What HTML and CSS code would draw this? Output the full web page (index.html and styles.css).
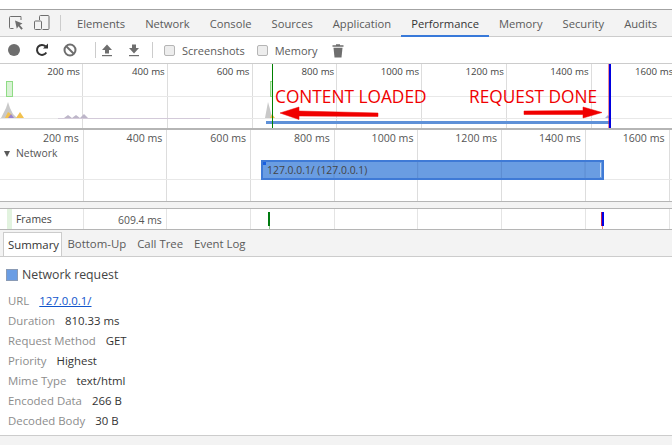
FILE: index.html
```html
<!DOCTYPE html>
<html lang="en">
<head>
<meta charset="utf-8">
<title>DevTools Performance</title>
<link rel="stylesheet" href="styles.css">
</head>
<body>
<div class="devtools">
  <nav class="tabbar">
    <div class="tool-icons">
      <svg class="icon" width="18" height="18" viewBox="0 0 18 18"><path d="M14 3.5V2.5H3.5A1 1 0 0 0 2.5 3.5V13.500A1 1 0 0 0 3.500 14.500H6.500M14 3.500V6" fill="none" stroke="#6e6e6e" stroke-width="1"/><path d="M8 6.500L15.500 9.500L12.800 11L15.800 14.500L14.300 15.800L11.500 12.300L9.800 14.800Z" fill="#6e6e6e"/></svg>
      <svg class="icon" width="18" height="18" viewBox="0 0 18 18"><path d="M6.500 6V2.500A1 1 0 0 1 7.500 1.500H15A1 1 0 0 1 16 2.500V14.500A1 1 0 0 1 15 15.500H9.500" fill="none" stroke="#6e6e6e"/><rect x="1.500" y="7" width="7" height="8.500" rx="1" fill="none" stroke="#6e6e6e"/></svg>
    </div>
    <span class="vsep tab-sep"></span>
    <a class="tab">Elements</a><a class="tab">Network</a><a class="tab">Console</a><a class="tab">Sources</a><a class="tab">Application</a><a class="tab active">Performance</a><a class="tab">Memory</a><a class="tab">Security</a><a class="tab">Audits</a>
  </nav>

  <div class="toolbar">
    <svg class="tool rec" width="14" height="14" viewBox="0 0 14 14"><circle cx="7" cy="7" r="6" fill="#6e6e6e"/></svg>
    <svg class="tool" width="14" height="14" viewBox="0 0 14 14"><path d="M11.300 9.500A5 5 0 1 1 10.500 3.300" fill="none" stroke="#333" stroke-width="2"/><path d="M8 5.500H13V0.500Z" fill="#333"/></svg>
    <svg class="tool" width="14" height="14" viewBox="0 0 14 14"><circle cx="7" cy="7" r="5.500" fill="none" stroke="#6e6e6e" stroke-width="2"/><path d="M3 3L11 11" stroke="#6e6e6e" stroke-width="2"/></svg>
    <span class="vsep bar-sep-a"></span>
    <svg class="tool tool-up" width="12" height="14" viewBox="0 0 12 14"><path d="M6 1.500L11 7H8V10.500H4V7H1Z" fill="#6e6e6e"/><rect x="1" y="12" width="10" height="1.200" fill="#6e6e6e"/></svg>
    <svg class="tool tool-down" width="12" height="14" viewBox="0 0 12 14"><path d="M6 10.500L11 5H8V1.500H4V5H1Z" fill="#6e6e6e"/><rect x="1" y="12" width="10" height="1.200" fill="#6e6e6e"/></svg>
    <span class="vsep bar-sep-b"></span>
    <label class="check"><span class="box"></span>Screenshots</label>
    <label class="check check-mem"><span class="box"></span>Memory</label>
    <svg class="trash" width="12" height="15" viewBox="0 0 12 15"><path d="M4 1.200H8V2.200H11.500V3.700H0.500V2.200H4Z" fill="#6e6e6e"/><path d="M1.500 4.700H10.500L9.500 14.500H2.500Z" fill="#6e6e6e"/></svg>
  </div>

  <section class="overview">
    <div class="ruler ruler-over">
      <span>200 ms</span><span>400 ms</span><span>600 ms</span><span>800 ms</span><span>1000 ms</span><span>1200 ms</span><span>1400 ms</span><span>1600 ms</span>
    </div>
    <svg class="chart" width="672" height="65" viewBox="0 64 672 65">
      <path d="M0 96.500H672M0 118.500H672" stroke="#e8e8e8"/>
      <rect x="6.500" y="81.500" width="6" height="15" fill="#d9f2d5" stroke="#8fdc85"/>
      <rect x="270.500" y="81.500" width="2" height="15" fill="#d9f2d5" stroke="#8fdc85"/>
      <path d="M1 118L6 108L8 102L10 108L13 114L17 118Z" fill="#c9c9c9"/>
      <path d="M5 118L8 112L11 114L13 118Z" fill="#f2c14e"/>
      <path d="M8 118L11 114L14 118Z" fill="#9a82cf"/>
      <path d="M16 118L20 112L24 118Z" fill="#f2c14e"/>
      <path d="M64 118L68 115L72 118ZM72 118L76 115L80 118ZM80 118L84 114L88 118Z" fill="#bdb6c9"/>
      <path d="M58 118.500H210" stroke="#d3cad9" stroke-width="1"/>
      <path d="M265 118L268 102L270 109L272 118Z" fill="#c9c9c9"/>
      <path d="M270 118L272 114L275 118Z" fill="#f2c14e"/>
      <path d="M605 118L608 115L610 118Z" fill="#a8b8d8"/>
      <rect x="266" y="121" width="344" height="3" fill="#5f91d8"/>
      <rect x="272" y="64" width="1" height="65" fill="#008000"/>
      <rect x="608.500" y="64" width="1" height="65" fill="#e02040"/>
      <rect x="609" y="64" width="2" height="65" fill="#0000e0"/>
      <path d="M280 113L299 107V111L378 113V116.500L299 116V119.500Z" fill="#f00000" stroke="#f00000" stroke-linejoin="round" stroke-width="0.500"/>
      <path d="M602 112.500L583 107V110.500L524 111V114.500L583 114.500V118Z" fill="#f00000" stroke="#f00000" stroke-linejoin="round" stroke-width="0.500"/>
    </svg>
    <span class="note note-a">CONTENT LOADED</span>
    <span class="note note-b">REQUEST DONE</span>
  </section>

  <section class="flame">
    <div class="ruler ruler-main">
      <span>200 ms</span><span>400 ms</span><span>600 ms</span><span>800 ms</span><span>1000 ms</span><span>1200 ms</span><span>1400 ms</span><span>1600 ms</span>
    </div>
    <div class="net-row">
      <div class="net-head"><i class="tri"></i>Network</div>
      <div class="net-bar"><i class="bar-dot"></i><i class="bar-tick"></i><span>127.0.0.1/ (127.0.0.1)</span></div>
    </div>
  </section>

  <div class="divider"></div>

  <section class="frames">
    <div class="grid-lines"><i></i><i></i><i></i><i></i><i></i><i></i><i></i><i></i></div>
    <i class="frame-pip"></i>
    <span class="frames-label">Frames</span>
    <span class="frames-time">609.4 ms</span>
    <i class="mark mark-green"></i>
    <i class="mark mark-blue"></i>
    <i class="pip pip-green"></i>
    <i class="pip pip-red"></i>
  </section>

  <nav class="subtabs">
    <a class="subtab on">Summary</a><a class="subtab">Bottom-Up</a><a class="subtab">Call Tree</a><a class="subtab">Event Log</a>
  </nav>

  <section class="summary">
    <h2 class="sum-title"><i class="swatch"></i>Network request</h2>
    <dl class="sum-list">
      <div><dt>URL</dt><dd><a class="link">127.0.0.1/</a></dd></div>
      <div><dt>Duration</dt><dd>810.33 ms</dd></div>
      <div><dt>Request Method</dt><dd>GET</dd></div>
      <div><dt>Priority</dt><dd>Highest</dd></div>
      <div><dt>Mime Type</dt><dd>text/html</dd></div>
      <div><dt>Encoded Data</dt><dd>266 B</dd></div>
      <div><dt>Decoded Body</dt><dd>30 B</dd></div>
    </dl>
  </section>
  <div class="footer"></div>
</div>
</body>
</html>
```
FILE: styles.css
```css
* { box-sizing: border-box; }
html, body { margin: 0; padding: 0; background: #fff; }
body { width: 672px; height: 445px; overflow: hidden; }
.devtools {
  padding-top: 9px;
  font-family: "Open Sans", "Noto Sans", sans-serif;
  font-size: 11.4px;
  color: #333;
  display: flex;
  flex-direction: column;
  height: 445px;
}
.devtools i { display: block; }

.tabbar {
  height: 28px;
  flex: none;
  display: flex;
  align-items: stretch;
  background: #f3f3f3;
  border-top: 1px solid #a3a3a3;
  border-bottom: 1px solid #ccc;
  padding-left: 7px;
  font-size: 11.2px;
}
.tool-icons { display: flex; align-items: center; gap: 8px; margin-top: -1px; }
.icon { display: block; }
.vsep { display: block; width: 1px; height: 16px; background: #ccc; align-self: center; flex: none; }
.tab-sep { margin-left: 9px; margin-right: 6px; }
.tab {
  padding: 0 10px;
  display: flex;
  align-items: center;
  color: #5a5a5a;
}
.tab.active { color: #333; border-bottom: 2px solid #3879d9; margin-bottom: -1px; padding-top: 1px; }

.toolbar {
  height: 27px;
  flex: none;
  display: flex;
  align-items: center;
  background: #fff;
  border-bottom: 1px solid #ccc;
  padding-left: 7px;
  font-size: 11px;
}
.tool { display: block; flex: none; margin-right: 14px; }
.tool-up { margin-left: 12px; margin-right: 15px; }
.tool-down { margin-right: 0; }
.bar-sep-a { margin-left: 4px; margin-right: -7px; }
.bar-sep-b { margin-left: 12px; margin-right: 11px; }
.check { display: flex; align-items: center; color: #5a5a5a; }
.check-mem { margin-left: 12px; }
.box {
  display: block;
  width: 11px;
  height: 11px;
  margin-right: 7px;
  background: #ededed;
  border: 1px solid #b5b5b5;
  border-radius: 2px;
}
.trash { display: block; margin-left: 14px; }

.ruler { display: flex; align-items: flex-start; }
.ruler span {
  flex: none;
  text-align: right;
  border-right: 1px solid #ddd;
  color: #444;
}

.overview { position: relative; height: 66px; flex: none; border-bottom: 2px solid #b5b5b5; overflow: hidden; }
.ruler-over { height: 100%; margin-left: -1.75px; }
.ruler-over span { width: 84.75px; height: 100%; padding: 0 2px 0 0; font-size: 9.7px; line-height: 15px; }
.chart { position: absolute; left: 0; top: 0; display: block; }
.note {
  position: absolute;
  top: 22px;
  color: #f00000;
  font-size: 17.300px;
  line-height: 22px;
  white-space: nowrap;
}
.note-a { left: 275px; }
.note-b { left: 469px; }

.flame { position: relative; height: 71px; flex: none; }
.ruler-main { height: 100%; }
.ruler-main span { width: 83.7px; height: 100%; padding: 0 4px 0 0; font-size: 10.6px; line-height: 16px; color: #555; }
.net-row {
  position: absolute;
  left: 0;
  right: 0;
  top: 17px;
  height: 33px;
  border-bottom: 1px solid #e8e8e8;
}
.net-head { display: flex; align-items: center; gap: 5px; padding-left: 4px; height: 11px; margin-top: 1px; line-height: 11px; font-size: 10.4px; color: #555; }
.tri { width: 0; height: 0; border-left: 3.500px solid transparent; border-right: 3.500px solid transparent; border-top: 6px solid #5a5a5a; margin-right: 1px; }
.net-bar {
  position: absolute;
  left: 261px;
  top: 13px;
  width: 343px;
  height: 20px;
  background-color: #6a9de2;
  background-image: linear-gradient(90deg, transparent 82.7px, #5b8bd0 82.7px);
  background-size: 83.7px 100%;
  background-position: -12.2px 0;
  border: 2px solid #3f7ad6;
  padding-left: 4px;
  line-height: 16px;
  font-size: 10.4px;
  color: #444;
}
.bar-dot { position: absolute; left: 0; top: 0; width: 3px; height: 3px; background: #1a5fe0; }
.bar-tick { position: absolute; right: 1px; top: 1px; width: 1px; height: 14px; background: #c6d8f3; }

.divider {
  height: 8px;
  flex: none;
  background: #f3f3f3;
  border-top: 1px solid #b5b5b5;
  border-bottom: 1px solid #b5b5b5;
}

.frames { position: relative; height: 20px; flex: none; }
.grid-lines { display: flex; height: 100%; }
.grid-lines i { width: 83.7px; flex: none; height: 100%; border-right: 1px solid #e4e4e4; }
.frame-pip { position: absolute; left: 7px; top: 0; bottom: 0; width: 5px; background: #e2f3df; }
.frames-label { position: absolute; left: 16px; top: 2px; line-height: 16px; font-size: 10.4px; color: #444; }
.frames-time { position: absolute; left: 118px; top: 3px; line-height: 16px; font-size: 10.4px; color: #555; }
.mark { position: absolute; top: 3px; height: 14px; }
.mark-green { left: 268px; width: 2px; background: #007a10; }
.mark-blue { left: 601px; width: 3px; background: #0000e8; border-left: 1px solid #c02050; }
.pip { position: absolute; top: 17px; bottom: 0; width: 1px; }
.pip-green { left: 269px; background: #8fc890; }
.pip-red { left: 602px; background: #f08a80; }

.subtabs {
  height: 28px;
  flex: none;
  display: flex;
  align-items: stretch;
  background: #f3f3f3;
  border-top: 1px solid #b5b5b5;
  border-bottom: 1px solid #ccc;
  padding: 2px 0 0 3px;
}
.subtab { display: flex; align-items: center; padding: 0 6px 1px; color: #5a5a5a; }
.subtab + .subtab { padding: 0 5.500px 1px; }
.subtab.on { width: 59px; color: #333; background: #fff; border: 1px solid #ccc; border-bottom: 0; padding: 0 3px 0 4px; }

.summary { flex: 1; padding: 9px 0 0 6px; background: #fff; }
.sum-title {
  display: flex;
  align-items: center;
  margin: 0 0 6px;
  font-weight: 400;
  font-size: 12.300px;
  line-height: 18px;
  color: #444;
}
.swatch { width: 12px; height: 12px; margin-right: 4px; background: #6a9de4; border: 1px solid #8a9bb5; }
.sum-list { margin: 0 0 0 2px; }
.sum-list div { display: flex; height: 20px; align-items: center; }
.sum-list dt { color: #8c8c8c; margin-right: 10px; }
.sum-list dd { margin: 0; color: #333; }
.link { color: #1155cc; text-decoration: underline; }
.footer { height: 10px; flex: none; background: #f3f3f3; border-top: 1px solid #ccc; }
```
